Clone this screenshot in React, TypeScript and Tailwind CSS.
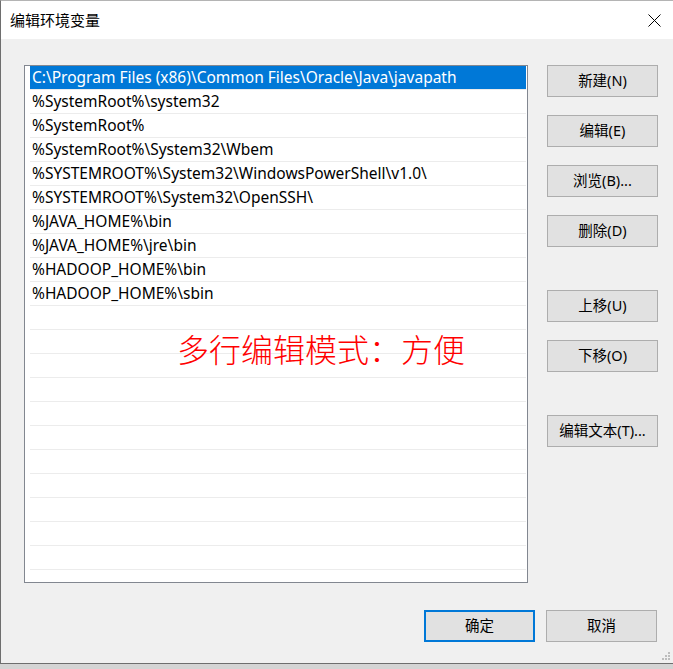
const paths = [
  'C:\\Program Files (x86)\\Common Files\\Oracle\\Java\\javapath',
  '%SystemRoot%\\system32',
  '%SystemRoot%',
  '%SystemRoot%\\System32\\Wbem',
  '%SYSTEMROOT%\\System32\\WindowsPowerShell\\v1.0\\',
  '%SYSTEMROOT%\\System32\\OpenSSH\\',
  '%JAVA_HOME%\\bin',
  '%JAVA_HOME%\\jre\\bin',
  '%HADOOP_HOME%\\bin',
  '%HADOOP_HOME%\\sbin',
];

const rows = [...paths, ...Array(12).fill('')];

const font = { fontFamily: '"Noto Sans", "Noto Sans CJK SC", sans-serif' };

function Btn({ label, className = '', primary = false }: { label: string; className?: string; primary?: boolean }) {
  return (
    <button
      className={`w-[111px] h-[32px] bg-[#e1e1e1] text-[14.5px] text-black flex items-center justify-center ${
        primary ? 'border-2 border-[#0078d7]' : 'border border-[#adadad]'
      } ${className}`}
    >
      {label}
    </button>
  );
}

export default function App() {
  return (
    <div className="w-[673px] h-[669px] bg-[#d4d4d4] overflow-hidden" style={font}>
      <div className="h-[664px] flex flex-col border-l border-b border-t border-l-[#6e6e6e] border-b-[#6e6e6e] border-t-[#b4b4b4] bg-[#f0f0f0]">
        {/* title bar */}
        <div className="h-[38px] bg-white flex items-center justify-between pl-[9px] pr-[12px] shrink-0">
          <span className="text-[15px] text-black">编辑环境变量</span>
          <svg width="13" height="13" viewBox="0 0 13 13">
            <path d="M0.5 0.5 L12.5 12.5 M12.5 0.5 L0.5 12.5" stroke="#000" strokeWidth="1" />
          </svg>
        </div>

        {/* body */}
        <div className="flex-1 flex flex-col relative">
          <div className="flex pt-[26px] pl-[23px]">
            <div className="relative w-[504px] h-[518px] bg-white border border-[#828790] overflow-hidden">
              <div className="pl-[5px] pr-[1px]">
                {rows.map((p, i) => (
                  <div
                    key={i}
                    className="h-[24px] border-b border-[#ececec] flex items-center"
                  >
                    <div
                      className={`h-[23px] w-full flex items-center pl-[2px] pt-[1px] text-[15.5px] whitespace-nowrap ${
                        i === 0 ? 'bg-[#0078d7] text-white' : 'text-black'
                      }`}
                    >
                      {p}
                    </div>
                  </div>
                ))}
              </div>
              <div
                className="absolute left-[152px] top-[266px] text-[32px] leading-[32px] text-[#ff0000] font-light whitespace-nowrap"
                style={{ fontFamily: '"Noto Sans CJK SC", sans-serif' }}
              >
                多行编辑模式：方便
              </div>
            </div>

            <div className="ml-[19px] flex flex-col">
              <Btn label="新建(N)" />
              <Btn label="编辑(E)" className="mt-[18px]" />
              <Btn label="浏览(B)..." className="mt-[18px]" />
              <Btn label="删除(D)" className="mt-[18px]" />
              <Btn label="上移(U)" className="mt-[43px]" />
              <Btn label="下移(O)" className="mt-[18px]" />
              <Btn label="编辑文本(T)..." className="mt-[43px]" />
            </div>
          </div>

          <div className="flex justify-end gap-[11px] pr-[16px] mt-[27px]">
            <Btn label="确定" primary />
            <Btn label="取消" />
          </div>

          <svg className="absolute right-[2px] bottom-[2px]" width="10" height="10" viewBox="0 0 10 10">
            <g fill="#bdbdbd">
              <rect x="7" y="1" width="2" height="2" />
              <rect x="4" y="4" width="2" height="2" />
              <rect x="7" y="4" width="2" height="2" />
              <rect x="1" y="7" width="2" height="2" />
              <rect x="4" y="7" width="2" height="2" />
              <rect x="7" y="7" width="2" height="2" />
            </g>
          </svg>
        </div>
      </div>
    </div>
  );
}
